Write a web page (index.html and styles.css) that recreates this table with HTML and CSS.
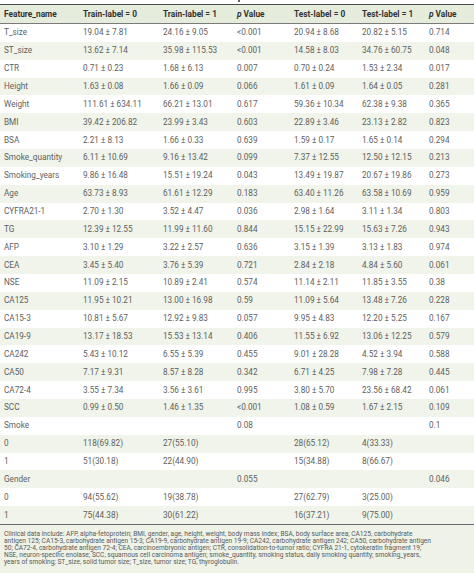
FILE: index.html
```html
<!DOCTYPE html>
<html>
<head>
<meta charset="utf-8">
<link rel="stylesheet" href="styles.css">
</head>
<body>
<div class="page">
  <div class="cut"></div>
  <table class="data">
    <colgroup>
      <col class="c1"><col class="c2"><col class="c3"><col class="c4"><col class="c5"><col class="c6"><col class="c7">
    </colgroup>
    <thead>
      <tr><th>Feature_name</th><th>Train-label = 0</th><th>Train-label = 1</th><th><i>p</i> Value</th><th>Test-label = 0</th><th>Test-label = 1</th><th><i>p</i> Value</th></tr>
    </thead>
    <tbody>
      <tr><td>T_size</td><td>19.04 ± 7.81</td><td>24.16 ± 9.05</td><td>&lt;0.001</td><td>20.94 ± 8.68</td><td>20.82 ± 5.15</td><td>0.714</td></tr>
      <tr><td>ST_size</td><td>13.62 ± 7.14</td><td>35.98 ± 115.53</td><td>&lt;0.001</td><td>14.58 ± 8.03</td><td>34.76 ± 60.75</td><td>0.048</td></tr>
      <tr><td>CTR</td><td>0.71 ± 0.23</td><td>1.68 ± 6.13</td><td>0.007</td><td>0.70 ± 0.24</td><td>1.53 ± 2.34</td><td>0.017</td></tr>
      <tr><td>Height</td><td>1.63 ± 0.08</td><td>1.66 ± 0.09</td><td>0.066</td><td>1.61 ± 0.09</td><td>1.64 ± 0.05</td><td>0.281</td></tr>
      <tr><td>Weight</td><td>111.61 ± 634.11</td><td>66.21 ± 13.01</td><td>0.617</td><td>59.36 ± 10.34</td><td>62.38 ± 9.38</td><td>0.365</td></tr>
      <tr><td>BMI</td><td>39.42 ± 206.82</td><td>23.99 ± 3.43</td><td>0.603</td><td>22.89 ± 3.46</td><td>23.13 ± 2.82</td><td>0.823</td></tr>
      <tr><td>BSA</td><td>2.21 ± 8.13</td><td>1.66 ± 0.33</td><td>0.639</td><td>1.59 ± 0.17</td><td>1.65 ± 0.14</td><td>0.294</td></tr>
      <tr><td>Smoke_quantity</td><td>6.11 ± 10.69</td><td>9.16 ± 13.42</td><td>0.099</td><td>7.37 ± 12.55</td><td>12.50 ± 12.15</td><td>0.213</td></tr>
      <tr><td>Smoking_years</td><td>9.86 ± 16.48</td><td>15.51 ± 19.24</td><td>0.043</td><td>13.49 ± 19.87</td><td>20.67 ± 19.86</td><td>0.273</td></tr>
      <tr><td>Age</td><td>63.73 ± 8.93</td><td>61.61 ± 12.29</td><td>0.183</td><td>63.40 ± 11.26</td><td>63.58 ± 10.69</td><td>0.959</td></tr>
      <tr><td>CYFRA21-1</td><td>2.70 ± 1.30</td><td>3.52 ± 4.47</td><td>0.036</td><td>2.98 ± 1.64</td><td>3.11 ± 1.34</td><td>0.803</td></tr>
      <tr><td>TG</td><td>12.39 ± 12.55</td><td>11.99 ± 11.60</td><td>0.844</td><td>15.15 ± 22.99</td><td>15.63 ± 7.26</td><td>0.943</td></tr>
      <tr><td>AFP</td><td>3.10 ± 1.29</td><td>3.22 ± 2.57</td><td>0.636</td><td>3.15 ± 1.39</td><td>3.13 ± 1.83</td><td>0.974</td></tr>
      <tr><td>CEA</td><td>3.45 ± 5.40</td><td>3.76 ± 5.39</td><td>0.721</td><td>2.84 ± 2.18</td><td>4.84 ± 5.60</td><td>0.061</td></tr>
      <tr><td>NSE</td><td>11.09 ± 2.15</td><td>10.89 ± 2.41</td><td>0.574</td><td>11.14 ± 2.11</td><td>11.85 ± 3.55</td><td>0.38</td></tr>
      <tr><td>CA125</td><td>11.95 ± 10.21</td><td>13.00 ± 16.98</td><td>0.59</td><td>11.09 ± 5.64</td><td>13.48 ± 7.26</td><td>0.228</td></tr>
      <tr><td>CA15-3</td><td>10.81 ± 5.67</td><td>12.92 ± 9.83</td><td>0.057</td><td>9.95 ± 4.83</td><td>12.20 ± 5.25</td><td>0.167</td></tr>
      <tr><td>CA19-9</td><td>13.17 ± 18.53</td><td>15.53 ± 13.14</td><td>0.406</td><td>11.55 ± 6.92</td><td>13.06 ± 12.25</td><td>0.579</td></tr>
      <tr><td>CA242</td><td>5.43 ± 10.12</td><td>6.55 ± 5.39</td><td>0.455</td><td>9.01 ± 28.28</td><td>4.52 ± 3.94</td><td>0.588</td></tr>
      <tr><td>CA50</td><td>7.17 ± 9.31</td><td>8.57 ± 8.28</td><td>0.342</td><td>6.71 ± 4.25</td><td>7.98 ± 7.28</td><td>0.445</td></tr>
      <tr><td>CA72-4</td><td>3.55 ± 7.34</td><td>3.56 ± 3.61</td><td>0.995</td><td>3.80 ± 5.70</td><td>23.56 ± 68.42</td><td>0.061</td></tr>
      <tr><td>SCC</td><td>0.99 ± 0.50</td><td>1.46 ± 1.35</td><td>&lt;0.001</td><td>1.08 ± 0.59</td><td>1.67 ± 2.15</td><td>0.109</td></tr>
      <tr><td>Smoke</td><td></td><td></td><td>0.08</td><td></td><td></td><td>0.1</td></tr>
      <tr><td>0</td><td>118(69.82)</td><td>27(55.10)</td><td></td><td>28(65.12)</td><td>4(33.33)</td><td></td></tr>
      <tr><td>1</td><td>51(30.18)</td><td>22(44.90)</td><td></td><td>15(34.88)</td><td>8(66.67)</td><td></td></tr>
      <tr><td>Gender</td><td></td><td></td><td>0.055</td><td></td><td></td><td>0.046</td></tr>
      <tr><td>0</td><td>94(55.62)</td><td>19(38.78)</td><td></td><td>27(62.79)</td><td>3(25.00)</td><td></td></tr>
      <tr><td>1</td><td>75(44.38)</td><td>30(61.22)</td><td></td><td>16(37.21)</td><td>9(75.00)</td><td></td></tr>
    </tbody>
  </table>
  <div class="note">Clinical data include: AFP, alpha-fetoprotein; BMI, gender, age, height, weight, body mass index; BSA, body surface area; CA125, carbohydrate<br>antigen 125; CA15-3, carbohydrate antigen 15-3; CA19-9, carbohydrate antigen 19-9; CA242, carbohydrate antigen 242; CA50, carbohydrate antigen<br>50; CA72-4, carbohydrate antigen 72-4; CEA, carcinoembryonic antigen; CTR, consolidation-to-tumor ratio; CYFRA 21-1, cytokeratin fragment 19;<br>NSE, neuron-specific enolase; SCC, squamous cell carcinoma antigen; smoke_quantity, smoking status, daily smoking quantity; smoking_years,<br>years of smoking; ST_size, solid tumor size; T_size, tumor size; TG, thyroglobulin.</div>
</div>
</body>
</html>
```

FILE: styles.css
```css
html, body {
  margin: 0;
  padding: 0;
  background: #ffffff;
}
.page {
  width: 474px;
  padding-top: 4px;
  font-family: Roboto, "Liberation Sans", sans-serif;
  position: relative;
}
.cut {
  position: absolute;
  left: 238px;
  top: 0;
  width: 2px;
  height: 2px;
  background: #666;
}
.data {
  width: 474px;
  border-collapse: collapse;
  table-layout: fixed;
  border-top: 1px solid #4a4a4a;
  border-bottom: 1px solid #6a6a6a;
}
.c1 { width: 79px; }
.c2 { width: 80px; }
.c3 { width: 74px; }
.c4 { width: 57px; }
.c5 { width: 68px; }
.c6 { width: 67px; }
.c7 { width: 49px; }
.data th {
  background: #e6ecdc;
  color: #333;
  font-weight: bold;
  font-size: 8.3px;
  text-align: left;
  padding: 0 0 0 4px;
  height: 18px;
  border-bottom: 1px solid #7a7a7a;
  white-space: nowrap;
}
.data td {
  color: #5f5f5f;
  font-size: 8.2px;
  padding: 0 0 1px 4px;
  height: 16.86px;
  white-space: nowrap;
}
.data tbody tr:nth-child(even) td {
  background: #f0f4ea;
}
.note {
  background: #eef2e7;
  color: #5a5a5a;
  font-size: 6.6px;
  line-height: 7px;
  padding: 6px 4px 7px 4px;
  white-space: nowrap;
  overflow: hidden;
}
```
